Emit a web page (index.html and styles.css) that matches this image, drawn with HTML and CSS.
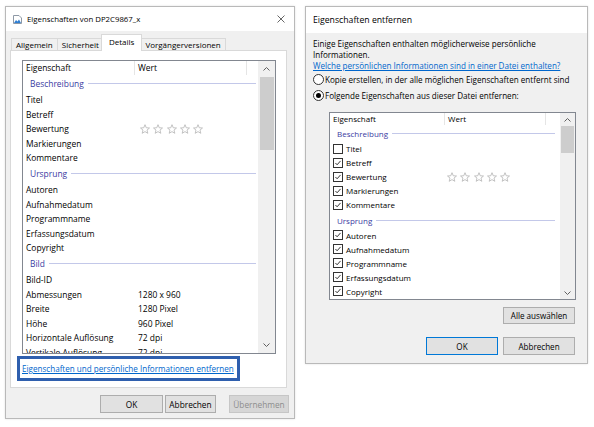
FILE: index.html
```html
<!DOCTYPE html>
<html lang="de">
<head>
<meta charset="utf-8">
<title>Eigenschaften</title>
<link rel="stylesheet" href="styles.css">
</head>
<body>
<svg class="defs" width="0" height="0" aria-hidden="true">
  <defs>
    <symbol id="star" viewBox="0 0 10 10">
      <path d="M5 0.7 L6.25 3.75 L9.5 4 L7 6.1 L7.8 9.3 L5 7.6 L2.2 9.3 L3 6.1 L0.5 4 L3.75 3.75 Z" fill="none" stroke="#b4b4b4" stroke-width="0.8" stroke-linejoin="round"/>
    </symbol>
    <symbol id="chk" viewBox="0 0 10 10">
      <path d="M1.8 5 L3.9 7.2 L8.2 2.4" fill="none" stroke="#000" stroke-width="1"/>
    </symbol>
    <symbol id="up" viewBox="0 0 7 4">
      <path d="M0.5 3.5 L3.5 0.5 L6.5 3.5" fill="none" stroke="#606060" stroke-width="1"/>
    </symbol>
    <symbol id="down" viewBox="0 0 7 4">
      <path d="M0.5 0.5 L3.5 3.5 L6.5 0.5" fill="none" stroke="#606060" stroke-width="1"/>
    </symbol>
  </defs>
</svg>
<div class="stage">
  <section class="win win-left">
    <header class="titlebar">
      <svg class="ticon" viewBox="0 0 9 9">
        <path d="M0.5 0.5 H6 L8.5 3 V8.5 H0.5 Z" fill="#fff" stroke="#8e99a6"/>
        <path d="M1 8 L3 5 L4.5 6.5 L6 4.5 L8 8 Z" fill="#2f7fd3"/>
      </svg>
      <span class="ttext">Eigenschaften von DP2C9867_x</span>
      <svg class="close" viewBox="0 0 8 8">
        <path d="M0.5 0.5 L7.5 7.5 M7.5 0.5 L0.5 7.5" stroke="#555" stroke-width="0.9"/>
      </svg>
    </header>
    <div class="lbody">
      <div class="tabs">
        <div class="tab">Allgemein</div>
        <div class="tab">Sicherheit</div>
        <div class="tab active">Details</div>
        <div class="tab">Vorgängerversionen</div>
      </div>
      <div class="panel">
        <div class="lb lb-left">
          <div class="lb-main">
            <div class="hd"><span class="hc1">Eigenschaft</span><span class="hc2">Wert</span></div>
            <div class="grp"><span>Beschreibung</span></div>
            <div class="row"><span class="c1">Titel</span></div>
            <div class="row"><span class="c1">Betreff</span></div>
            <div class="row"><span class="c1">Bewertung</span><span class="stars"><svg><use href="#star"/></svg><svg><use href="#star"/></svg><svg><use href="#star"/></svg><svg><use href="#star"/></svg><svg><use href="#star"/></svg></span></div>
            <div class="row"><span class="c1">Markierungen</span></div>
            <div class="row"><span class="c1">Kommentare</span></div>
            <div class="grp"><span>Ursprung</span></div>
            <div class="row"><span class="c1">Autoren</span></div>
            <div class="row"><span class="c1">Aufnahmedatum</span></div>
            <div class="row"><span class="c1">Programmname</span></div>
            <div class="row"><span class="c1">Erfassungsdatum</span></div>
            <div class="row"><span class="c1">Copyright</span></div>
            <div class="grp"><span>Bild</span></div>
            <div class="row"><span class="c1">Bild-ID</span></div>
            <div class="row"><span class="c1">Abmessungen</span><span>1280 x 960</span></div>
            <div class="row"><span class="c1">Breite</span><span>1280 Pixel</span></div>
            <div class="row"><span class="c1">Höhe</span><span>960 Pixel</span></div>
            <div class="row"><span class="c1">Horizontale Auflösung</span><span>72 dpi</span></div>
            <div class="row"><span class="c1">Vertikale Auflösung</span><span>72 dpi</span></div>
          </div>
          <div class="sbar">
            <div class="arr"><svg><use href="#up"/></svg></div>
            <div class="track"><div class="thumb"></div></div>
            <div class="arr"><svg><use href="#down"/></svg></div>
          </div>
        </div>
        <div class="linkbox"><a class="link" href="#">Eigenschaften und persönliche Informationen entfernen</a></div>
      </div>
      <div class="btnrow">
        <div class="btn b-ok-l">OK</div>
        <div class="btn b-cancel-l">Abbrechen</div>
        <div class="btn b-apply">Übernehmen</div>
      </div>
    </div>
  </section>

  <section class="win win-right">
    <header class="titlebar">
      <span class="ttext">Eigenschaften entfernen</span>
    </header>
    <div class="rbody">
      <p class="intro">Einige Eigenschaften enthalten möglicherweise persönliche<br>Informationen.</p>
      <a class="link link-q" href="#">Welche persönlichen Informationen sind in einer Datei enthalten?</a>
      <div class="radio-row"><span class="radio"></span><span>Kopie erstellen, in der alle möglichen Eigenschaften entfernt sind</span></div>
      <div class="radio-row r2"><span class="radio on"></span><span>Folgende Eigenschaften aus dieser Datei entfernen:</span></div>
      <div class="lb lb-right">
        <div class="lb-main">
          <div class="hd"><span class="hc1">Eigenschaft</span><span class="hc2">Wert</span></div>
          <div class="grp"><span>Beschreibung</span></div>
          <div class="row"><span class="c1"><span class="cb"></span>Titel</span></div>
          <div class="row"><span class="c1"><span class="cb"><svg><use href="#chk"/></svg></span>Betreff</span></div>
          <div class="row"><span class="c1"><span class="cb"><svg><use href="#chk"/></svg></span>Bewertung</span><span class="stars"><svg><use href="#star"/></svg><svg><use href="#star"/></svg><svg><use href="#star"/></svg><svg><use href="#star"/></svg><svg><use href="#star"/></svg></span></div>
          <div class="row"><span class="c1"><span class="cb"><svg><use href="#chk"/></svg></span>Markierungen</span></div>
          <div class="row"><span class="c1"><span class="cb"><svg><use href="#chk"/></svg></span>Kommentare</span></div>
          <div class="grp"><span>Ursprung</span></div>
          <div class="row"><span class="c1"><span class="cb"><svg><use href="#chk"/></svg></span>Autoren</span></div>
          <div class="row"><span class="c1"><span class="cb"><svg><use href="#chk"/></svg></span>Aufnahmedatum</span></div>
          <div class="row"><span class="c1"><span class="cb"><svg><use href="#chk"/></svg></span>Programmname</span></div>
          <div class="row"><span class="c1"><span class="cb"><svg><use href="#chk"/></svg></span>Erfassungsdatum</span></div>
          <div class="row"><span class="c1"><span class="cb"><svg><use href="#chk"/></svg></span>Copyright</span></div>
        </div>
        <div class="sbar">
          <div class="arr"><svg><use href="#up"/></svg></div>
          <div class="track"><div class="thumb"></div></div>
          <div class="arr"><svg><use href="#down"/></svg></div>
        </div>
      </div>
      <div class="btn b-all">Alle auswählen</div>
      <div class="btnrow-r">
        <div class="btn b-ok-r">OK</div>
        <div class="btn b-cancel-r">Abbrechen</div>
      </div>
    </div>
  </section>
</div>
</body>
</html>
```

FILE: styles.css
```css
* { box-sizing: border-box; }
html, body { margin: 0; }
body {
  width: 594px;
  height: 427px;
  overflow: hidden;
  background: #ffffff;
  font-family: "Open Sans", "Noto Sans", sans-serif;
  font-size: 8.3px;
  color: #000;
}
.defs { position: absolute; width: 0; height: 0; }

.stage {
  display: flex;
  align-items: flex-start;
  gap: 10px;
  padding: 6px 0 0 5px;
}

.win {
  border: 1px solid #b9b9b9;
  background: #f0f0f0;
  display: flex;
  flex-direction: column;
  box-shadow: 0 0 2px rgba(0, 0, 0, 0.12);
}
.win-left { width: 290px; height: 413px; }
.win-right { width: 283px; height: 358px; }

.titlebar {
  flex: none;
  background: #fff;
  display: flex;
  align-items: center;
  white-space: nowrap;
}
.win-left .titlebar { height: 24px; padding: 0 9px 0 7px; font-size: 7.8px; }
.win-right .titlebar { height: 26px; padding-left: 7px; font-size: 8.7px; }
.ticon { width: 9px; height: 9px; margin-right: 5px; flex: none; }
.close { width: 8px; height: 8px; margin-left: auto; flex: none; }

/* left window body */
.lbody {
  flex: 1;
  padding: 3px 7px 0 4px;
  display: flex;
  flex-direction: column;
}
.tabs {
  display: flex;
  align-items: flex-end;
  height: 16px;
  padding-left: 1px;
  position: relative;
  z-index: 1;
  font-size: 8px;
}
.tab {
  height: 12px;
  padding: 0 4px;
  border: 1px solid #d9d9d9;
  border-bottom: none;
  background: #f0f0f0;
  margin-right: -1px;
  line-height: 11px;
  white-space: nowrap;
}
.tab.active {
  height: 17px;
  margin: 0 -2px -1px -2px;
  padding: 0 7px;
  background: #fff;
  line-height: 14px;
  position: relative;
  z-index: 2;
}
.panel {
  height: 338px;
  border: 1px solid #d9d9d9;
  background: #fff;
  padding: 9px 10px 0 11px;
  display: flex;
  flex-direction: column;
  align-items: flex-start;
}

/* list boxes */
.lb {
  display: flex;
  border: 1px solid #828790;
  background: #fff;
  overflow: hidden;
  flex: none;
}
.lb-main { flex: 1; overflow: hidden; min-width: 0; }
.hd { display: flex; white-space: nowrap; }
.hd span { padding-left: 3px; border-right: 1px solid #e5e5e5; }
.row { display: flex; align-items: center; white-space: nowrap; }
.row .c1 { display: flex; align-items: center; flex: none; padding-left: 3px; }
.grp { display: flex; align-items: center; padding-left: 7px; color: #3b3ba2; white-space: nowrap; }
.grp::after { content: ""; flex: 1; height: 1px; background: #c3c8e9; margin-left: 4px; }
.stars { display: flex; gap: 3.3px; }
.stars svg { width: 10px; height: 10px; }

.sbar { flex: none; background: #f0f0f0; display: flex; flex-direction: column; }
.arr { flex: none; display: flex; align-items: center; justify-content: center; }
.arr svg { width: 7px; height: 4px; }
.track { flex: 1; }
.thumb { background: #cdcdcd; }

.lb-left { width: 254px; height: 294px; font-size: 8.45px; }
.lb-left .hd { height: 14px; line-height: 14px; }
.lb-left .hc1 { width: 112px; }
.lb-left .hc2 { width: 112px; }
.lb-left .row { height: 14.5px; }
.lb-left .row .c1 { width: 115px; }
.lb-left .grp { height: 17.5px; }
.lb-left .grp::after { margin-right: 2px; }
.lb-left .stars { margin-left: 2px; }
.lb-left .sbar { width: 17px; }
.lb-left .arr { height: 16px; }
.lb-left .thumb { height: 73px; margin: 0 1px 0 2px; }

.lb-right { width: 247px; height: 188px; margin: 9px 0 0 16px; font-size: 8px; }
.lb-right .hd { height: 12px; line-height: 12px; }
.lb-right .hc1 { width: 115px; }
.lb-right .hc2 { width: 101px; }
.lb-right .row { height: 14px; }
.lb-right .row .c1 { width: 117px; }
.lb-right .grp { height: 16.7px; }
.lb-right .grp::after { margin-right: 5px; }
.lb-right .sbar { width: 15px; }
.lb-right .arr { height: 13px; }
.lb-right .thumb { height: 27px; margin: 0 1px; }

.cb {
  width: 10px;
  height: 10px;
  border: 1px solid #333;
  background: #fff;
  margin-right: 3px;
  display: flex;
  flex: none;
}
.cb svg { width: 8px; height: 8px; }

.linkbox {
  width: 223px;
  height: 25px;
  margin: 2px 0 0 -5px;
  border: 3px solid #2f5fae;
  padding-left: 2px;
  display: flex;
  align-items: center;
  font-size: 8.1px;
}
.link { color: #0066cc; text-decoration: underline; white-space: nowrap; }

/* buttons */
.btn {
  height: 18px;
  border: 1px solid #adadad;
  background: #e1e1e1;
  display: flex;
  align-items: center;
  justify-content: center;
  white-space: nowrap;
  flex: none;
}
.btnrow {
  display: flex;
  justify-content: flex-end;
  margin: 7px -2px 0 0;
}
.b-ok-l { width: 63px; }
.b-cancel-l { width: 51px; margin-left: 2px; }
.b-apply { width: 60px; margin-left: 13px; color: #8d8d8d; background: #d6d6d6; border-color: #c6c6c6; }

/* right window body */
.rbody {
  flex: 1;
  padding: 6px 11px 0 7px;
  display: flex;
  flex-direction: column;
  font-size: 8.1px;
}
.intro { margin: 0; line-height: 10.5px; }
.link-q { line-height: 12px; align-self: flex-start; }
.radio-row { display: flex; align-items: center; height: 15px; white-space: nowrap; }
.radio-row.r2 { height: 16px; }
.radio {
  width: 11px;
  height: 11px;
  border: 1px solid #333;
  border-radius: 50%;
  background: #fff;
  margin-right: 1px;
  display: flex;
  align-items: center;
  justify-content: center;
  flex: none;
}
.radio.on::after { content: ""; width: 5px; height: 5px; border-radius: 50%; background: #000; }
.b-all { width: 72px; height: 17px; align-self: flex-end; margin: 7px 1px 0 0; }
.btnrow-r { display: flex; justify-content: flex-end; gap: 5px; margin: 13px 1px 0 0; }
.b-ok-r { width: 72px; border-color: #0078d7; }
.b-cancel-r { width: 72px; }
```
